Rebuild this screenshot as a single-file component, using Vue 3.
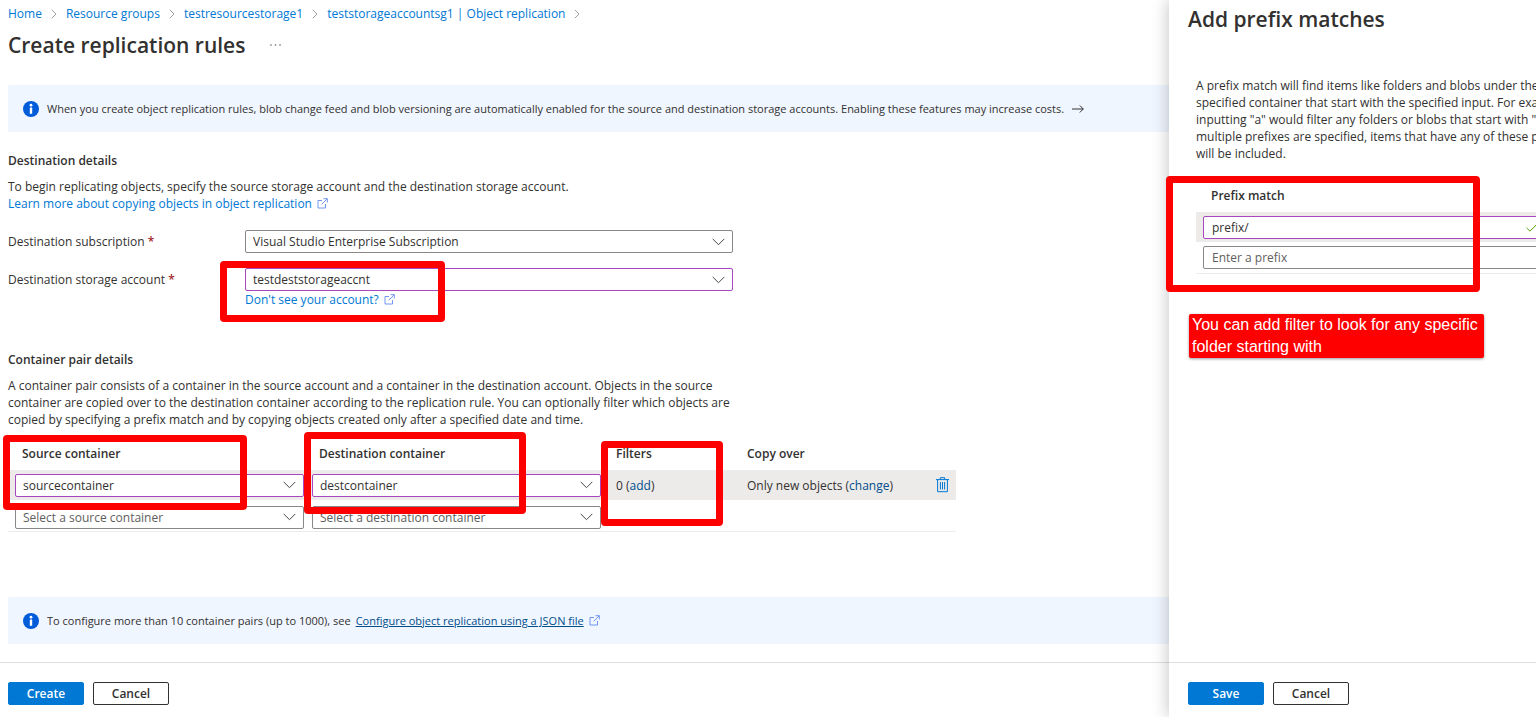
<script setup>
import { ref } from 'vue'

const crumbs = ['Home', 'Resource groups', 'testresourcestorage1', 'teststorageaccountsg1 | Object replication']
const subscription = ref('Visual Studio Enterprise Subscription')
const account = ref('testdeststorageaccnt')
const source = ref('sourcecontainer')
const destination = ref('destcontainer')
const prefix = ref('prefix/')
const nextPrefix = ref('')
</script>

<template>
  <div class="page">
    <main class="blade">
      <div class="content">
        <nav class="crumbs" aria-label="Breadcrumb">
          <template v-for="c in crumbs" :key="c">
            <a href="#">{{ c }}</a>
            <svg class="sep" viewBox="0 0 6 10"><path d="M.8.8 5 5 .8 9.200" /></svg>
          </template>
        </nav>

        <header class="title-row">
          <h1>Create replication rules</h1>
          <button class="more" aria-label="More">
            <svg viewBox="0 0 12 2"><circle cx="1" cy="1" r=".8" /><circle cx="5.500" cy="1" r=".8" /><circle cx="10" cy="1" r=".8" /></svg>
          </button>
        </header>

        <div class="banner">
          <svg class="info" viewBox="0 0 16 16"><circle cx="8" cy="8" r="8" /><rect x="6.800" y="6.500" width="2.400" height="6.300" /><circle class="dot" cx="8" cy="4.200" r="1.400" /></svg>
          <span>When you create object replication rules, blob change feed and blob versioning are automatically enabled for the source and destination storage accounts. Enabling these features may increase costs.</span>
          <svg class="arrow" viewBox="0 0 12 8"><path d="M0 4h11.300M7.800.5 11.300 4 7.800 7.500" /></svg>
        </div>

        <section class="details">
          <h2>Destination details</h2>
          <p>
            To begin replicating objects, specify the source storage account and the destination storage account.<br />
            <a href="#">Learn more about copying objects in object replication<svg class="ext" viewBox="0 0 11 11"><path d="M5 2.500H1v7.500h7.500V6M6.500.7h3.800v3.800M10.300.7 4.700 6.300" /></svg></a>
          </p>
          <div class="field">
            <label for="sub">Destination subscription <b>*</b></label>
            <div class="drop">
              <select id="sub" v-model="subscription"><option>Visual Studio Enterprise Subscription</option></select>
              <svg class="chev" viewBox="0 0 13 8"><path d="M.7.9 6.500 6.700 12.300.9" /></svg>
            </div>
          </div>
          <div class="field account">
            <label for="acct">Destination storage account <b>*</b></label>
            <div class="stack">
              <div class="drop edited">
                <select id="acct" v-model="account"><option>testdeststorageaccnt</option></select>
                <svg class="chev" viewBox="0 0 13 8"><path d="M.7.9 6.500 6.700 12.300.9" /></svg>
              </div>
              <a href="#">Don't see your account?<svg class="ext" viewBox="0 0 11 11"><path d="M5 2.500H1v7.500h7.500V6M6.500.7h3.800v3.800M10.300.7 4.700 6.300" /></svg></a>
              <span class="mark mark-account"></span>
            </div>
          </div>
        </section>

        <section class="pairs">
          <h2>Container pair details</h2>
          <p>
            A container pair consists of a container in the source account and a container in the destination account. Objects in the source<br />
            container are copied over to the destination container according to the replication rule. You can optionally filter which objects are<br />
            copied by specifying a prefix match and by copying objects created only after a specified date and time.
          </p>
          <div class="pair-table">
            <table>
              <colgroup><col class="c-box" /><col class="c-box" /><col class="c-filter" /><col /><col class="c-del" /></colgroup>
              <thead>
                <tr><th>Source container</th><th>Destination container</th><th>Filters</th><th>Copy over</th><th></th></tr>
              </thead>
              <tbody>
                <tr class="active">
                  <td class="cell">
                    <div class="drop edited">
                      <select v-model="source" aria-label="Source container"><option>sourcecontainer</option></select>
                      <svg class="chev" viewBox="0 0 13 8"><path d="M.7.9 6.500 6.700 12.300.9" /></svg>
                    </div>
                  </td>
                  <td class="cell">
                    <div class="drop edited">
                      <select v-model="destination" aria-label="Destination container"><option>destcontainer</option></select>
                      <svg class="chev" viewBox="0 0 13 8"><path d="M.7.9 6.500 6.700 12.300.9" /></svg>
                    </div>
                  </td>
                  <td>0 (<a href="#">add</a>)</td>
                  <td>Only new objects (<a href="#">change</a>)</td>
                  <td class="del">
                    <button aria-label="Delete">
                      <svg viewBox="0 0 13 16"><path d="M0 2.600h13M4.300 2.400V.7h4.400v1.700M1.600 2.600v12.100h9.800V2.600M4.400 5v7.500M6.500 5v7.500M8.600 5v7.500" /></svg>
                    </button>
                  </td>
                </tr>
                <tr class="blank">
                  <td class="cell">
                    <div class="drop empty">
                      <select aria-label="New source container"><option>Select a source container</option></select>
                      <svg class="chev" viewBox="0 0 13 8"><path d="M.7.9 6.500 6.700 12.300.9" /></svg>
                    </div>
                  </td>
                  <td class="cell">
                    <div class="drop empty">
                      <select aria-label="New destination container"><option>Select a destination container</option></select>
                      <svg class="chev" viewBox="0 0 13 8"><path d="M.7.9 6.500 6.700 12.300.9" /></svg>
                    </div>
                  </td>
                  <td></td><td></td><td></td>
                </tr>
              </tbody>
            </table>
            <span class="mark mark-source"></span>
            <span class="mark mark-dest"></span>
            <span class="mark mark-filter"></span>
          </div>
        </section>

        <div class="banner json">
          <svg class="info" viewBox="0 0 16 16"><circle cx="8" cy="8" r="8" /><rect x="6.800" y="6.500" width="2.400" height="6.300" /><circle class="dot" cx="8" cy="4.200" r="1.400" /></svg>
          <span>To configure more than 10 container pairs (up to 1000), see</span>
          <a href="#">Configure object replication using a JSON file</a>
          <svg class="ext" viewBox="0 0 11 11"><path d="M5 2.500H1v7.500h7.500V6M6.500.7h3.800v3.800M10.300.7 4.700 6.300" /></svg>
        </div>
      </div>

      <footer>
        <button class="btn primary">Create</button>
        <button class="btn">Cancel</button>
      </footer>
    </main>

    <aside class="panel">
      <div class="panel-body">
        <h1>Add prefix matches</h1>
        <p>
          A prefix match will find items like folders and blobs under the<br />
          specified container that start with the specified input. For example,<br />
          inputting "a" would filter any folders or blobs that start with "a". If<br />
          multiple prefixes are specified, items that have any of these prefixes<br />
          will be included.
        </p>
        <div class="prefixes">
          <h2>Prefix match</h2>
          <div class="prefix-row active">
            <div class="text edited">
              <input v-model="prefix" aria-label="Prefix match" />
              <svg class="check" viewBox="0 0 12 9"><path d="M.6 4.800 4 8.200 11.400.8" /></svg>
            </div>
          </div>
          <div class="prefix-row blank">
            <div class="text"><input v-model="nextPrefix" placeholder="Enter a prefix" aria-label="New prefix match" /></div>
          </div>
          <span class="mark mark-prefix"></span>
        </div>
        <div class="note">You can add filter to look for any specific<br />folder starting with</div>
      </div>
      <footer>
        <button class="btn primary">Save</button>
        <button class="btn">Cancel</button>
      </footer>
    </aside>
  </div>
</template>

<style>
body {
  margin: 0;
}
</style>

<style scoped>
* {
  box-sizing: border-box;
}
.page {
  display: grid;
  grid-template-columns: minmax(0, 1fr) 367px;
  min-height: 100vh;
  overflow: hidden;
  background: #fff;
  color: #323130;
  font: 12px/17px "Open Sans", "Noto Sans", sans-serif;
}
h1, h2, p {
  margin: 0;
}
h1 {
  font-size: 21px;
  line-height: 30px;
  font-weight: 600;
}
h2 {
  font-size: 12px;
  line-height: 17px;
  font-weight: 600;
}
a {
  color: #0078d4;
  text-decoration: none;
}
svg {
  flex: none;
  fill: none;
  stroke: currentColor;
}
button, input, select {
  font: inherit;
  color: inherit;
}
.blade, .panel {
  display: flex;
  flex-direction: column;
  min-width: 0;
}
.content {
  padding: 5px 0 0 8px;
}
.crumbs {
  display: flex;
  align-items: center;
  gap: 9px;
  line-height: 18px;
  white-space: nowrap;
}
.sep {
  width: 6px;
  height: 10px;
  color: #a19f9d;
}
.title-row {
  display: flex;
  align-items: center;
  gap: 25px;
  margin-top: 7px;
}
.more {
  display: flex;
  padding: 0;
  border: 0;
  background: none;
}
.more svg {
  width: 12px;
  height: 2px;
  fill: #605e5c;
  stroke: none;
}
.banner {
  display: flex;
  align-items: center;
  height: 47px;
  margin-top: 25px;
  padding-left: 15px;
  border-radius: 2px 0 0 2px;
  background: #f0f6ff;
  font-size: 11px;
  white-space: nowrap;
}
.info {
  width: 16px;
  height: 16px;
  margin-right: 8px;
  fill: #015cda;
  stroke: none;
}
.info rect, .info .dot {
  fill: #fff;
}
.arrow {
  width: 12px;
  height: 8px;
  margin-left: 8px;
}
.details, .pairs {
  white-space: nowrap;
}
.details {
  margin-top: 20px;
}
.details p {
  margin-top: 9px;
}
.ext {
  width: 11px;
  height: 11px;
  margin-left: 5px;
  color: #4f7df0;
  stroke-width: 0.8;
  vertical-align: -1px;
}
.field {
  display: grid;
  grid-template-columns: 237px minmax(0, 488px);
  margin-top: 18px;
}
.field label {
  line-height: 23px;
}
.field b {
  color: #a4262c;
  font-weight: 600;
}
.field.account {
  margin-top: 15px;
}
.stack {
  position: relative;
  display: flex;
  flex-direction: column;
  align-items: flex-start;
}
.stack .drop {
  width: 100%;
}
.drop, .text {
  display: grid;
  align-items: center;
  height: 23px;
  border: 1px solid #8a8886;
  border-radius: 2px;
  background: #fff;
}
.drop.edited, .text.edited {
  border-color: #a846c0;
}
.drop select, .text input {
  grid-area: 1 / 1;
  width: 100%;
  height: 21px;
  padding: 0 8px;
  border: 0;
  outline: 0;
  appearance: none;
  background: transparent;
}
.drop select {
  padding: 0 7px;
}
.drop.empty select, .text input::placeholder {
  color: #605e5c;
  opacity: 1;
}
.chev, .check {
  grid-area: 1 / 1;
  justify-self: end;
  pointer-events: none;
}
.chev {
  width: 13px;
  height: 8px;
  margin-right: 7px;
  color: #484644;
}
.pairs {
  margin-top: 43px;
}
.pairs p {
  margin-top: 9px;
}
.pair-table {
  position: relative;
  max-width: 948px;
  margin-top: 9px;
}
table {
  width: 100%;
  table-layout: fixed;
  border-collapse: separate;
  border-spacing: 0;
}
.c-box {
  width: 297px;
}
.c-filter {
  width: 131px;
}
.c-del {
  width: 40px;
}
th {
  height: 33px;
  padding: 0 0 0 14px;
  font-weight: 600;
  text-align: left;
}
td {
  height: 30px;
  padding: 0 0 0 14px;
}
.cell {
  padding: 0 1px 0 7px;
}
.active {
  background: #edebe9;
}
.active a {
  color: #004e8c;
}
.blank td {
  height: 32px;
  padding-top: 3px;
  border-bottom: 1px solid #edebe9;
}
.del {
  padding: 0 7px 0 0;
}
.del button {
  display: flex;
  margin-left: auto;
  padding: 0;
  border: 0;
  background: none;
  color: #0078d4;
}
.del svg {
  width: 13px;
  height: 16px;
}
.json {
  margin-top: 65px;
}
.json a {
  margin-left: 5px;
  color: #004e8c;
  text-decoration: underline;
}
footer {
  display: flex;
  gap: 9px;
  height: 55px;
  margin-top: auto;
  padding: 19px 0 0 8px;
  border-top: 1px solid #e1dfdd;
}
.btn {
  width: 76px;
  height: 23px;
  padding: 0;
  border: 1px solid #323130;
  border-radius: 2px;
  background: #fff;
  font-weight: 600;
  line-height: 21px;
}
.primary {
  border-color: #0078d4;
  background: #0078d4;
  color: #fff;
}
.panel {
  z-index: 1;
  background: #fff;
  box-shadow: 0 0 16px rgba(0, 0, 0, 0.25);
  white-space: nowrap;
}
.panel h1 {
  padding: 4px 0 0 19px;
}
.panel p {
  margin: 43px 0 0 27px;
}
.panel footer {
  padding-left: 19px;
}
.prefixes {
  position: relative;
  width: 390px;
  margin: 25px 0 0 27px;
}
.prefixes h2 {
  padding: 0 0 8px 15px;
}
.prefix-row {
  padding: 4px 0 3px 7px;
}
.prefix-row.blank {
  padding: 4px 0 4px 7px;
  border-bottom: 1px solid #edebe9;
}
.text {
  width: 350px;
}
.check {
  width: 12px;
  height: 9px;
  margin-right: 14px;
  color: #57a300;
}
.mark {
  position: absolute;
  border: 7px solid #f00;
  border-radius: 4px;
  pointer-events: none;
}
.mark-account {
  top: -7px;
  left: -25px;
  width: 225px;
  height: 61px;
}
.mark-source {
  top: -2px;
  left: -5px;
  width: 244px;
  height: 75px;
}
.mark-dest {
  top: -5px;
  left: 296px;
  width: 222px;
  height: 82px;
}
.mark-filter {
  top: 4px;
  left: 593px;
  width: 122px;
  height: 85px;
}
.mark-prefix {
  top: -11px;
  left: -30px;
  width: 314px;
  height: 116px;
}
.note {
  width: 295px;
  margin: 40px 0 0 20px;
  padding: 0 3px;
  border-radius: 2px;
  background: #f00;
  box-shadow: 0 1px 3px rgba(0, 0, 0, 0.4);
  color: #fff;
  font: 16px/22px "Liberation Sans", Arial, sans-serif;
}
</style>
